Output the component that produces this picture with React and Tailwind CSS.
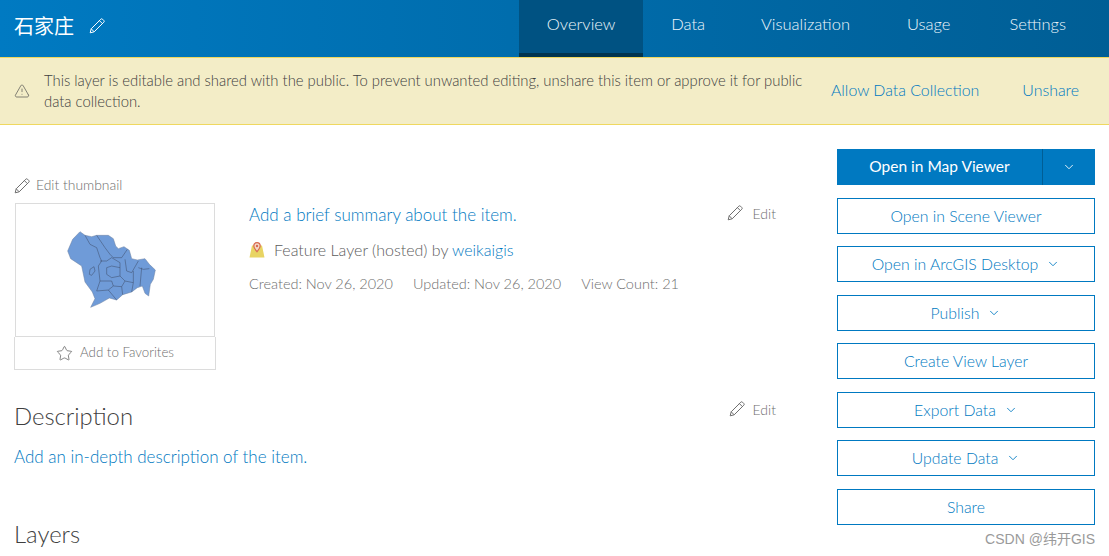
import React from 'react';
import { ChevronDown, Star, TriangleAlert } from 'lucide-react';

const font = "font-['Lato','Noto_Sans_CJK_SC',sans-serif]";

function PencilIcon({ className }) {
    return (
        <svg viewBox="0 0 16 16" fill="none" stroke="currentColor" strokeWidth="1" className={className}>
            <path d="M1.2 14.8l1-4L11.8 1.2a1.2 1.2 0 0 1 1.7 0l1.3 1.3a1.2 1.2 0 0 1 0 1.7L5.2 13.8z" />
            <path d="M2.2 10.8l3 3M10.4 2.600l3 3" />
        </svg>
    );
}

function MapThumb() {
    return (
        <svg viewBox="0 0 360 300" className="w-[120px] h-[100px]">
            <path
                d="M90 47L105 58L125 62L140 58L175 58L190 68L197 90L205 98L222 92L238 103L245 128L262 132L285 128L298 145L316 162L310 190L301 205L296 240L285 232L277 210L262 215L245 228L218 236L200 252L178 246L150 262L122 274L135 248L127 228L105 198L95 150L62 128L53 105L68 70Z"
                fill="#6f9bd8"
                stroke="#6a7f9e"
                strokeWidth="1.500"
            />
            <path
                d="M105 58L120 85L140 95L150 125L155 135L145 150L150 195L140 225M140 58L165 95L180 115L190 125L215 125L232 100M150 135L170 135L185 125L210 140L210 180L185 185L170 175L170 155L185 150L210 155M225 130L230 165L245 170L265 135M250 165L250 200L245 228M275 155L270 210M298 158L280 160L265 155M210 180L225 195L250 200M150 195L185 195L190 210L215 212L225 195M140 225L175 222L190 240L200 252M190 210L175 222M215 212L218 236M118 175L120 160L132 152L135 165L125 178Z"
                fill="none"
                stroke="#3c4a66"
                strokeWidth="1.500"
            />
        </svg>
    );
}

function LayerIcon() {
    return (
        <svg viewBox="0 0 16 16" className="w-[16px] h-[16px] shrink-0">
            <path d="M3 3.500h2l3 6 3-6h2l2.500 12h-15z" fill="#e8d463" />
            <path d="M8 0.700c2.200 0 3.200 1.500 3.200 3.200 0 2.200-2 4.300-3.200 5.800-1.200-1.500-3.200-3.600-3.200-5.800C4.800 2.200 5.800 0.700 8 0.700z" fill="#f3d9c8" stroke="#d9694f" strokeWidth="1.200" />
            <circle cx="8" cy="4" r="1.200" fill="#d9694f" />
        </svg>
    );
}

function ActionButton({ label, menu }) {
    return (
        <button type="button" className="h-[36px] border border-[#0079c1] bg-white text-[#0079c1] text-[15.800px] font-light flex items-center justify-center gap-[8px]">
            {label}
            {menu && <ChevronDown size={14} strokeWidth={1.5} />}
        </button>
    );
}

function EditLink({ className }) {
    return (
        <div className={`flex items-center text-[14px] font-light text-[#6e6e6e] ${className}`}>
            <PencilIcon className="w-[16px] h-[16px] text-[#6e6e6e]" />
            Edit
        </div>
    );
}

export default function App() {
    return (
        <div className={`relative h-[556px] overflow-hidden bg-white ${font}`}>
            {/* Title bar */}
            <header className="h-[57px] flex justify-between bg-gradient-to-r from-[#007ac2] to-[#005e95] text-white">
                <div className="flex items-center pl-[14px] pb-[6px]">
                    <span className="text-[20px]">石家庄</span>
                    <PencilIcon className="w-[16px] h-[16px] ml-[15px]" />
                </div>
                <nav className="flex pr-[43px] text-[16.500px] font-light text-[#eef6fb]">
                    <a className="w-[124px] flex items-center justify-center pb-[4px] bg-[#005282] border-b-4 border-[#00344f]">Overview</a>
                    <a className="ml-[28px] flex items-center pb-[8px]">Data</a>
                    <a className="ml-[56px] flex items-center pb-[8px]">Visualization</a>
                    <a className="ml-[57px] flex items-center pb-[8px]">Usage</a>
                    <a className="ml-[59px] flex items-center pb-[8px]">Settings</a>
                </nav>
            </header>

            {/* Public editing notice */}
            <div className="h-[68px] flex items-center bg-[#f3edc7] border-y border-[#efd85f] pl-[14px]">
                <TriangleAlert size={16} strokeWidth={1} className="text-[#4a4a4a] shrink-0" />
                <p className="w-[775px] ml-[14px] text-[14.850px] font-light leading-[21px] text-[#3f3f3f]">
                    This layer is editable and shared with the public. To prevent unwanted editing, unshare this item or approve it for public data collection.
                </p>
                <a className="ml-[12px] mb-[2px] text-[15.900px] font-light text-[#0079c1]">Allow Data Collection</a>
                <a className="ml-[43px] mb-[2px] text-[15.900px] font-light text-[#0079c1]">Unshare</a>
            </div>

            <main className="flex pl-[14px]">
                <div className="w-[762px] shrink-0">
                    <div className="flex">
                        {/* Thumbnail */}
                        <div className="w-[202px] shrink-0 pt-[52px]">
                            <div className="h-[17px] flex items-center gap-[6px] text-[13.900px] font-light text-[#6e6e6e]">
                                <PencilIcon className="w-[16px] h-[16px] text-[#6e6e6e]" />
                                Edit thumbnail
                            </div>
                            <div className="mt-[9px] mx-px h-[134px] pb-[9px] pr-[10px] border border-[#dcdcdc] flex items-center justify-center">
                                <MapThumb />
                            </div>
                            <div className="h-[33px] border border-t-0 border-[#dcdcdc] flex items-center justify-center gap-[7px] text-[13.300px] font-light text-[#6e6e6e]">
                                <Star size={17} strokeWidth={1} className="text-[#555555]" />
                                Add to Favorites
                            </div>
                        </div>

                        {/* Summary */}
                        <div className="ml-[33px] flex-1 pt-[79px]">
                            <div className="h-[22px] flex justify-between items-start">
                                <a className="text-[17px] font-light leading-[22px] text-[#0079c1]">Add a brief summary about the item.</a>
                                <EditLink className="gap-[10px] h-[18px]" />
                            </div>
                            <div className="mt-[13px] flex items-center gap-[9px] text-[16px] font-light leading-[22px] text-[#5c5c5c]">
                                <LayerIcon />
                                <span>Feature Layer (hosted) by <a className="text-[#0079c1]">weikaigis</a></span>
                            </div>
                            <div className="mt-[13px] flex gap-[20px] text-[14.500px] font-light leading-[20px] text-[#6e6e6e]">
                                <span>Created: Nov 26, 2020</span>
                                <span>Updated: Nov 26, 2020</span>
                                <span>View Count: 21</span>
                            </div>
                        </div>
                    </div>

                    <section className="mt-[31px] flex justify-between">
                        <h2 className="text-[23.900px] font-light leading-[30px] text-[#3f3f3f]">Description</h2>
                        <EditLink className="gap-[8px] h-[16px]" />
                    </section>
                    <a className="block mt-[14px] text-[17px] font-light leading-[24px] text-[#0079c1]">Add an in-depth description of the item.</a>
                    <h2 className="mt-[50px] text-[23.900px] font-light leading-[30px] text-[#3f3f3f]">Layers</h2>
                </div>

                {/* Actions */}
                <aside className="ml-[61px] w-[258px] shrink-0 pt-[24px] flex flex-col gap-[12.500px]">
                    <div className="h-[36px] flex bg-[#0079c1] text-white text-[15.500px]">
                        <button type="button" className="flex-1">Open in Map Viewer</button>
                        <button type="button" className="w-[53px] border-l border-[#005e95] flex items-center justify-center">
                            <ChevronDown size={14} strokeWidth={1.5} />
                        </button>
                    </div>
                    <ActionButton label="Open in Scene Viewer" />
                    <ActionButton label="Open in ArcGIS Desktop" menu />
                    <ActionButton label="Publish" menu />
                    <ActionButton label="Create View Layer" />
                    <ActionButton label="Export Data" menu />
                    <ActionButton label="Update Data" menu />
                    <ActionButton label="Share" />
                </aside>
            </main>

            <div className="absolute right-[14px] bottom-[8px] text-[14px] leading-[18px] text-[#9a9a9a] font-['Liberation_Sans','Noto_Sans_CJK_SC',sans-serif]">CSDN @纬开GIS</div>
        </div>
    );
}
